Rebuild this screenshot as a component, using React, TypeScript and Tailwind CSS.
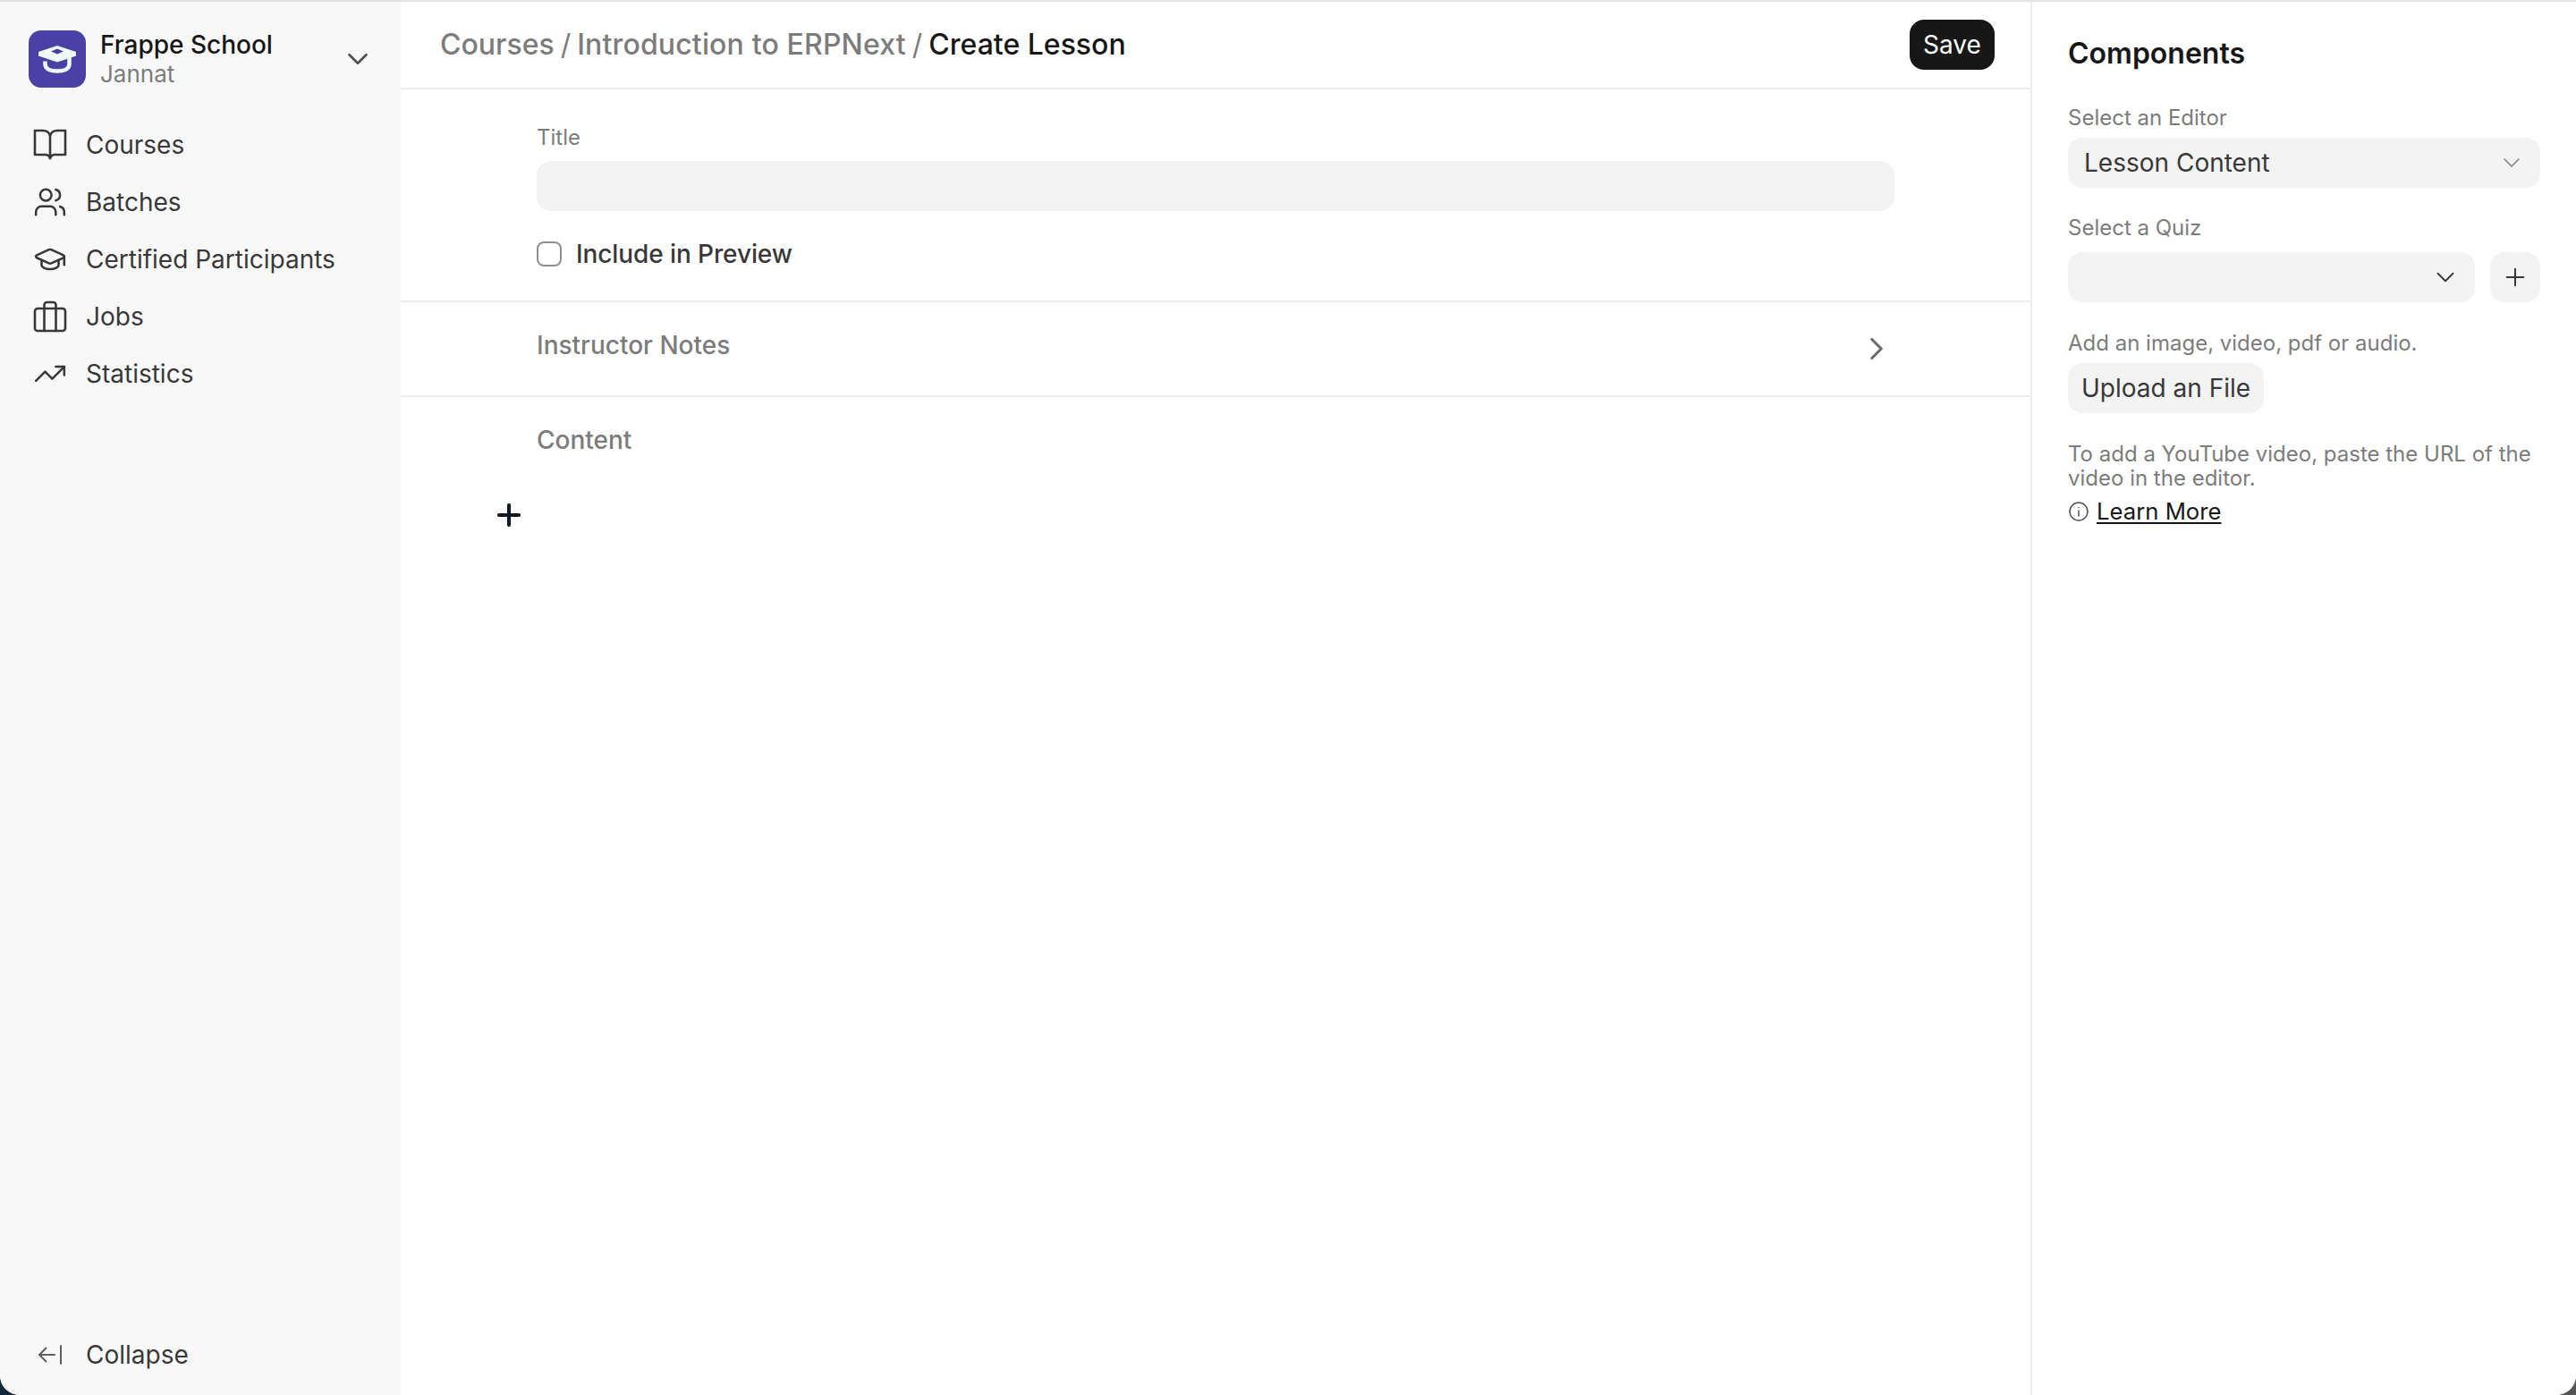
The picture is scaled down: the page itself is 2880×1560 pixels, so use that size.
import React from "react";
import { ChevronDown, ChevronRight, GraduationCap, Plus, TrendingUp, Users } from "lucide-react";

const BookIcon = () => (
  <svg width="38" height="36" viewBox="0 0 38 36" fill="none" stroke="#383838" strokeWidth="2.6" strokeLinejoin="round" strokeLinecap="round">
    <path d="M19 8v25" />
    <path d="M19 8C18 4 15 2 11 2H2v27h12c2.500 0 4 1.500 5 4 1-2.500 2.500-4 5-4h12V2h-9c-4 0-7 2-8 6z" />
  </svg>
);
const BagIcon = () => (
  <svg width="38" height="36" viewBox="0 0 38 36" fill="none" stroke="#383838" strokeWidth="2.600" strokeLinejoin="round" strokeLinecap="round">
    <rect x="2" y="9" width="34" height="25" rx="3" />
    <path d="M12.500 34V5a3 3 0 0 1 3-3h7a3 3 0 0 1 3 3v29" />
  </svg>
);
const CollapseIcon = () => (
  <svg width="28" height="24" viewBox="0 0 28 24" fill="none" stroke="#5f5f5f" strokeWidth="2" strokeLinejoin="round" strokeLinecap="round">
    <path d="M19 12H2" />
    <path d="M9.500 4.500 2 12l7.500 7.500" />
    <path d="M26 2v20" />
  </svg>
);
const Logo = () => (
  <div className="flex h-16 w-16 shrink-0 items-center justify-center rounded-[14px] bg-[#4a41a6]">
    <svg width="42" height="31" viewBox="0 0 42 31" fill="none">
      <path d="M21 0 42 7V11.500L21 18.500 0 11.500V7z" fill="#effaf6" />
      <path d="M21 3.500 14 6.500l7 3 7-3z" fill="#4a41a6" />
      <path d="M7.500 17.500v3.500c0 5 6 7.500 13.500 7.500s13.500-2.500 13.500-7.500v-9" stroke="#effaf6" strokeWidth="4.500" />
    </svg>
  </div>
);

const nav: { label: string; icon: React.ReactNode }[] = [
  { label: "Courses", icon: <BookIcon /> },
  { label: "Batches", icon: <Users size={38} strokeWidth={1.6} color="#383838" /> },
  { label: "Certified Participants", icon: <GraduationCap size={38} strokeWidth={1.6} color="#383838" /> },
  { label: "Jobs", icon: <BagIcon /> },
  { label: "Statistics", icon: <TrendingUp size={38} strokeWidth={1.6} color="#383838" /> },
];

function Sidebar() {
  return (
    <aside className="flex w-[448px] shrink-0 flex-col justify-between bg-[#f8f8f8]">
      <div>
        <div className="mt-8 flex h-16 items-center pl-8 pr-[29px]">
          <Logo />
          <div className="ml-4 flex-1 pb-[3px]">
            <div className="text-[28px] leading-[36px] font-medium text-[#171717]">Frappe School</div>
            <div className="text-[26px] leading-[30px] text-[#7c7c7c]">Jannat</div>
          </div>
          <ChevronDown size={38} strokeWidth={1.7} color="#525252" />
        </div>
        <nav className="mt-8 flex flex-col">
          {nav.map((n) => (
            <div key={n.label} className="flex h-16 items-center pl-[37px]">
              <span className="flex w-[59px] items-center">{n.icon}</span>
              <span className="text-[28px] text-[#383838]">{n.label}</span>
            </div>
          ))}
        </nav>
      </div>
      <div className="mb-[13px] flex h-16 items-center pl-[42px]">
        <span className="flex w-[54px] items-center">
          <CollapseIcon />
        </span>
        <span className="text-[28px] text-[#383838]">Collapse</span>
      </div>
    </aside>
  );
}

function Main() {
  return (
    <main className="flex min-w-0 flex-1 flex-col bg-white">
      <header className="flex h-[98px] shrink-0 items-center justify-between border-b-2 border-[#ededed] pl-[44px] pr-10">
        <div className="flex gap-[7px] text-[32px] font-medium text-[#7c7c7c]">
          <span>Courses</span>
          <span className="font-normal">/</span>
          <span className="tracking-[0.15px]">Introduction to ERPNext</span>
          <span className="font-normal">/</span>
          <span className="text-[#171717]">Create Lesson</span>
        </div>
        <button className="flex h-14 w-[95px] items-center justify-center rounded-2xl bg-[#171717] text-[28px] text-white">Save</button>
      </header>
      <section className="border-b-2 border-[#ededed] px-[152px] pb-[38px] pt-[38px]">
        <div className="text-[24px] leading-8 text-[#7c7c7c]">Title</div>
        <div className="mt-[10px] h-14 rounded-2xl bg-[#f3f3f3]" />
        <div className="mt-[34px] flex h-7 items-center">
          <span className="h-7 w-7 rounded-lg border-2 border-[#8f8f8f] bg-white" />
          <span className="ml-4 text-[28px] font-medium tracking-[-0.1px] text-[#383838]">Include in Preview</span>
        </div>
      </section>
      <section className="flex h-[106px] items-center justify-between border-b-2 border-[#ededed] pl-[152px] pr-[151px]">
        <span className="mb-2 text-[28px] font-medium text-[#7c7c7c]">Instructor Notes</span>
        <ChevronRight size={42} strokeWidth={1.8} color="#6b6b6b" />
      </section>
      <section className="pl-[152px] pt-[28px]">
        <div className="text-[28px] leading-10 font-medium text-[#7c7c7c]">Content</div>
      </section>
      <div className="ml-[102px] mt-[45px]">
        <Plus size={38} strokeWidth={2.6} color="#111827" />
      </div>
    </main>
  );
}

function Panel() {
  return (
    <aside className="flex w-[610px] shrink-0 flex-col border-l-2 border-[#ededed] bg-white pl-10 pr-10">
      <h2 className="mt-[38px] text-[32px] leading-10 font-semibold text-[#171717]">Components</h2>
      <div className="mt-9 text-[24px] leading-8 text-[#7c7c7c]">Select an Editor</div>
      <div className="mt-[6px] flex h-14 items-center justify-between rounded-2xl bg-[#f3f3f3] pl-[18px] pr-4">
        <span className="text-[28px] text-[#383838]">Lesson Content</span>
        <ChevronDown size={32} strokeWidth={1.3} color="#8a8a8a" />
      </div>
      <div className="mt-[29px] text-[24px] leading-8 text-[#7c7c7c]">Select a Quiz</div>
      <div className="mt-[11px] flex gap-[17px]">
        <div className="flex h-14 flex-1 items-center justify-end rounded-2xl bg-[#f3f3f3] pr-4">
          <ChevronDown size={34} strokeWidth={1.3} color="#383838" />
        </div>
        <div className="flex h-14 w-14 items-center justify-center rounded-2xl bg-[#f3f3f3]">
          <Plus size={32} strokeWidth={1.5} color="#383838" />
        </div>
      </div>
      <div className="mt-[30px] text-[24px] leading-8 text-[#7c7c7c]">Add an image, video, pdf or audio.</div>
      <div className="mt-[6px]">
        <button className="h-14 w-[219px] rounded-2xl bg-[#f3f3f3] text-[28px] text-[#383838]">Upload an File</button>
      </div>
      <div className="mt-[32px] text-[24px] leading-[27px] text-[#7c7c7c]">
        To add a YouTube video, paste the URL of the video in the editor.
      </div>
      <div className="mt-[8px] flex items-center">
        <svg width="24" height="24" viewBox="0 0 24 24" fill="none" stroke="#525252" strokeWidth="1.5" strokeLinecap="round">
          <circle cx="12" cy="12" r="10" />
          <path d="M12 11v6" />
          <path d="M12 7.500v.1" />
        </svg>
        <a className="ml-2 text-[25.7px] leading-8 text-[#171717] underline underline-offset-[3px]">Learn More</a>
      </div>
    </aside>
  );
}

export default function App() {
  return (
    <div className="h-[1560px] w-[2880px] overflow-hidden bg-[linear-gradient(90deg,#14283c_0%,#14283c_50%,#555555_50%,#555555_100%)] [font-family:Inter,'Liberation_Sans',sans-serif]">
      <div className="flex h-full flex-col overflow-hidden rounded-b-[22px] bg-white">
        <div className="h-[2px] shrink-0 bg-[#e2e2e2]" />
        <div className="flex min-h-0 flex-1">
          <Sidebar />
          <Main />
          <Panel />
        </div>
      </div>
    </div>
  );
}
